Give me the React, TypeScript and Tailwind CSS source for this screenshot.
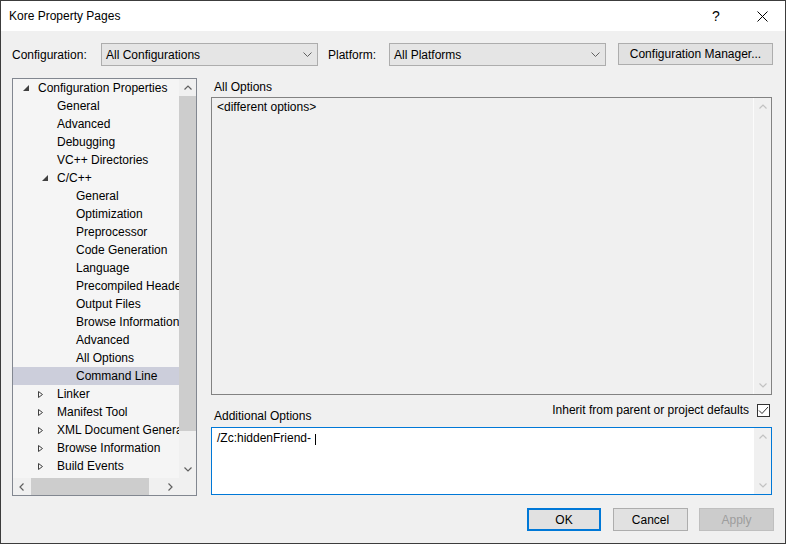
import React from "react";

type Row = { l: 0 | 1 | 2; t: string; e?: "open" | "closed"; sel?: boolean };

const rows: Row[] = [
  { l: 0, t: "Configuration Properties", e: "open" },
  { l: 1, t: "General" },
  { l: 1, t: "Advanced" },
  { l: 1, t: "Debugging" },
  { l: 1, t: "VC++ Directories" },
  { l: 1, t: "C/C++", e: "open" },
  { l: 2, t: "General" },
  { l: 2, t: "Optimization" },
  { l: 2, t: "Preprocessor" },
  { l: 2, t: "Code Generation" },
  { l: 2, t: "Language" },
  { l: 2, t: "Precompiled Heade" },
  { l: 2, t: "Output Files" },
  { l: 2, t: "Browse Information" },
  { l: 2, t: "Advanced" },
  { l: 2, t: "All Options" },
  { l: 2, t: "Command Line", sel: true },
  { l: 1, t: "Linker", e: "closed" },
  { l: 1, t: "Manifest Tool", e: "closed" },
  { l: 1, t: "XML Document Genera", e: "closed" },
  { l: 1, t: "Browse Information", e: "closed" },
  { l: 1, t: "Build Events", e: "closed" },
];

const indent = ["pl-[6px]", "pl-[25px]", "pl-[44px]"];

function Arrow({ dir, color = "#606060" }: { dir: "up" | "down" | "left" | "right"; color?: string }) {
  if (dir === "up")
    return (
      <svg width="8" height="5" viewBox="0 0 8 5">
        <path d="M0.5 4.5 L4 1 L7.5 4.5" stroke={color} strokeWidth="1.2" fill="none" />
      </svg>
    );
  if (dir === "down")
    return (
      <svg width="8" height="5" viewBox="0 0 8 5">
        <path d="M0.5 0.5 L4 4 L7.5 0.5" stroke={color} strokeWidth="1.2" fill="none" />
      </svg>
    );
  if (dir === "left")
    return (
      <svg width="5" height="8" viewBox="0 0 5 8">
        <path d="M4.5 0.5 L1 4 L4.5 7.5" stroke={color} strokeWidth="1.2" fill="none" />
      </svg>
    );
  return (
    <svg width="5" height="8" viewBox="0 0 5 8">
      <path d="M0.5 0.5 L4 4 L0.5 7.5" stroke={color} strokeWidth="1.2" fill="none" />
    </svg>
  );
}

function Dropdown({ text }: { text: string }) {
  return (
    <div className="w-[217px] h-[23px] border border-[#adadad] bg-[#e5e5e5] flex items-center pl-[4px] pr-[3px]">
      <span className="flex-1">{text}</span>
      <svg width="9" height="6" viewBox="0 0 9 6" className="mr-[2px]">
        <path d="M0.5 0.5 L4.5 4.5 L8.5 0.5" stroke="#606060" strokeWidth="1" fill="none" />
      </svg>
    </div>
  );
}

function Expander({ e }: { e?: "open" | "closed" }) {
  return (
    <svg width="19" height="18" viewBox="0 0 19 18" className="shrink-0">
      {e === "open" && <polygon points="10,6 10,12 4,12" fill="#404040" />}
      {e === "closed" && (
        <polygon points="0.5,6.5 4.5,9.5 0.5,12.5" fill="none" stroke="#404040" strokeWidth="1" />
      )}
    </svg>
  );
}

export default function App() {
  return (
    <div className="w-[786px] h-[544px] border border-[#3c3c3c] bg-[#f0f0f0] flex flex-col font-['Liberation_Sans',Arial,sans-serif] text-[12px] leading-[14px] text-black select-none overflow-hidden">
      {/* Title bar */}
      <div className="h-[30px] bg-white flex items-center shrink-0">
        <div className="pl-[8px] flex-1">Kore Property Pages</div>
        <div className="w-[46px] h-full flex items-center justify-center text-[14px]">?</div>
        <div className="w-[46px] h-full flex items-center justify-center">
          <svg width="11" height="11" viewBox="0 0 11 11">
            <path d="M0.5 0.5 L10.5 10.5 M10.5 0.5 L0.5 10.5" stroke="#000" strokeWidth="1" />
          </svg>
        </div>
      </div>

      {/* Configuration row */}
      <div className="mt-[12px] h-[23px] flex items-start pl-[11px] shrink-0">
        <div className="w-[89px] h-[23px] flex items-center">Configuration:</div>
        <Dropdown text="All Configurations" />
        <div className="ml-[10px] w-[61px] h-[23px] flex items-center">Platform:</div>
        <Dropdown text="All Platforms" />
        <div className="ml-[12px] w-[155px] h-[22px] border border-[#adadad] bg-[#e1e1e1] flex items-center justify-center">
          Configuration Manager...
        </div>
      </div>

      {/* Main */}
      <div className="mt-[12px] h-[418px] flex pl-[11px] shrink-0">
        {/* Tree */}
        <div className="w-[185px] h-[418px] border border-[#828790] bg-[#f5f5f5] flex flex-col">
          <div className="flex flex-1 min-h-0">
            <div className="flex-1 min-w-0 overflow-hidden">
              {rows.map((r, i) => (
                <div
                  key={i}
                  className={`h-[18px] flex items-center whitespace-nowrap ${indent[r.l]} ${r.sel ? "bg-[#cccedb]" : ""}`}
                >
                  <Expander e={r.e} />
                  <span>{r.t}</span>
                </div>
              ))}
            </div>
            <div className="w-[17px] bg-[#f0f0f0] flex flex-col">
              <div className="h-[17px] flex items-center justify-center">
                <Arrow dir="up" />
              </div>
              <div className="h-[335px] bg-[#cdcdcd]" />
              <div className="flex-1" />
              <div className="h-[17px] flex items-center justify-center">
                <Arrow dir="down" />
              </div>
            </div>
          </div>
          <div className="h-[17px] flex">
            <div className="flex-1 bg-[#f0f0f0] flex">
              <div className="w-[17px] flex items-center justify-center">
                <Arrow dir="left" />
              </div>
              <div className="ml-[1px] w-[118px] bg-[#cdcdcd]" />
              <div className="flex-1" />
              <div className="w-[17px] flex items-center justify-center">
                <Arrow dir="right" />
              </div>
            </div>
            <div className="w-[17px] bg-[#f0f0f0]" />
          </div>
        </div>

        {/* Right column */}
        <div className="ml-[14px] w-[561px] flex flex-col">
          <div className="h-[19px] pt-[2px] pl-[3px]">All Options</div>
          <div className="h-[298px] border border-[#828282] bg-[#f0f0f0] flex">
            <div className="flex-1 pl-[5px] pt-[2px]">&lt;different options&gt;</div>
            <div className="w-[18px] border-l border-[#fbfbfb] flex flex-col justify-between">
              <div className="h-[17px] flex items-center justify-center">
                <Arrow dir="up" color="#c2c2c2" />
              </div>
              <div className="h-[17px] flex items-center justify-center">
                <Arrow dir="down" color="#c2c2c2" />
              </div>
            </div>
          </div>

          <div className="h-[32px] flex justify-between">
            <div className="self-end mb-[4px] pl-[3px]">Additional Options</div>
            <div className="self-start pt-[8px] flex items-center gap-[8px] mr-[2px]">
              <span>Inherit from parent or project defaults</span>
              <div className="w-[13px] h-[13px] border border-[#333333] bg-white flex items-center justify-center">
                <svg width="11" height="11" viewBox="0 0 11 11">
                  <path d="M1 5.5 L4 8.5 L10 2" stroke="#333333" strokeWidth="1" fill="none" />
                </svg>
              </div>
            </div>
          </div>

          <div className="h-[68px] border border-[#0078d7] bg-white flex">
            <div className="flex-1 pl-[5px] pt-[3px] flex items-start">
              <span className="whitespace-pre">/Zc:hiddenFriend- </span>
              <span className="w-px h-[11px] mt-[3px] bg-black ml-[1px]" />
            </div>
            <div className="w-[17px] bg-[#f0f0f0] flex flex-col justify-between">
              <div className="h-[17px] flex items-center justify-center">
                <Arrow dir="up" color="#c2c2c2" />
              </div>
              <div className="h-[17px] flex items-center justify-center">
                <Arrow dir="down" color="#c2c2c2" />
              </div>
            </div>
          </div>
        </div>
      </div>

      {/* Buttons */}
      <div className="mt-[12px] h-[23px] flex justify-end pr-[11px] shrink-0">
        <div className="w-[74px] h-[23px] border-2 border-[#0078d7] bg-[#e1e1e1] flex items-center justify-center mr-[12px]">
          OK
        </div>
        <div className="w-[75px] h-[23px] border border-[#adadad] bg-[#e1e1e1] flex items-center justify-center mr-[11px]">
          Cancel
        </div>
        <div className="w-[75px] h-[23px] border border-[#bfbfbf] bg-[#cccccc] text-[#9d9d9d] flex items-center justify-center">
          Apply
        </div>
      </div>
    </div>
  );
}
